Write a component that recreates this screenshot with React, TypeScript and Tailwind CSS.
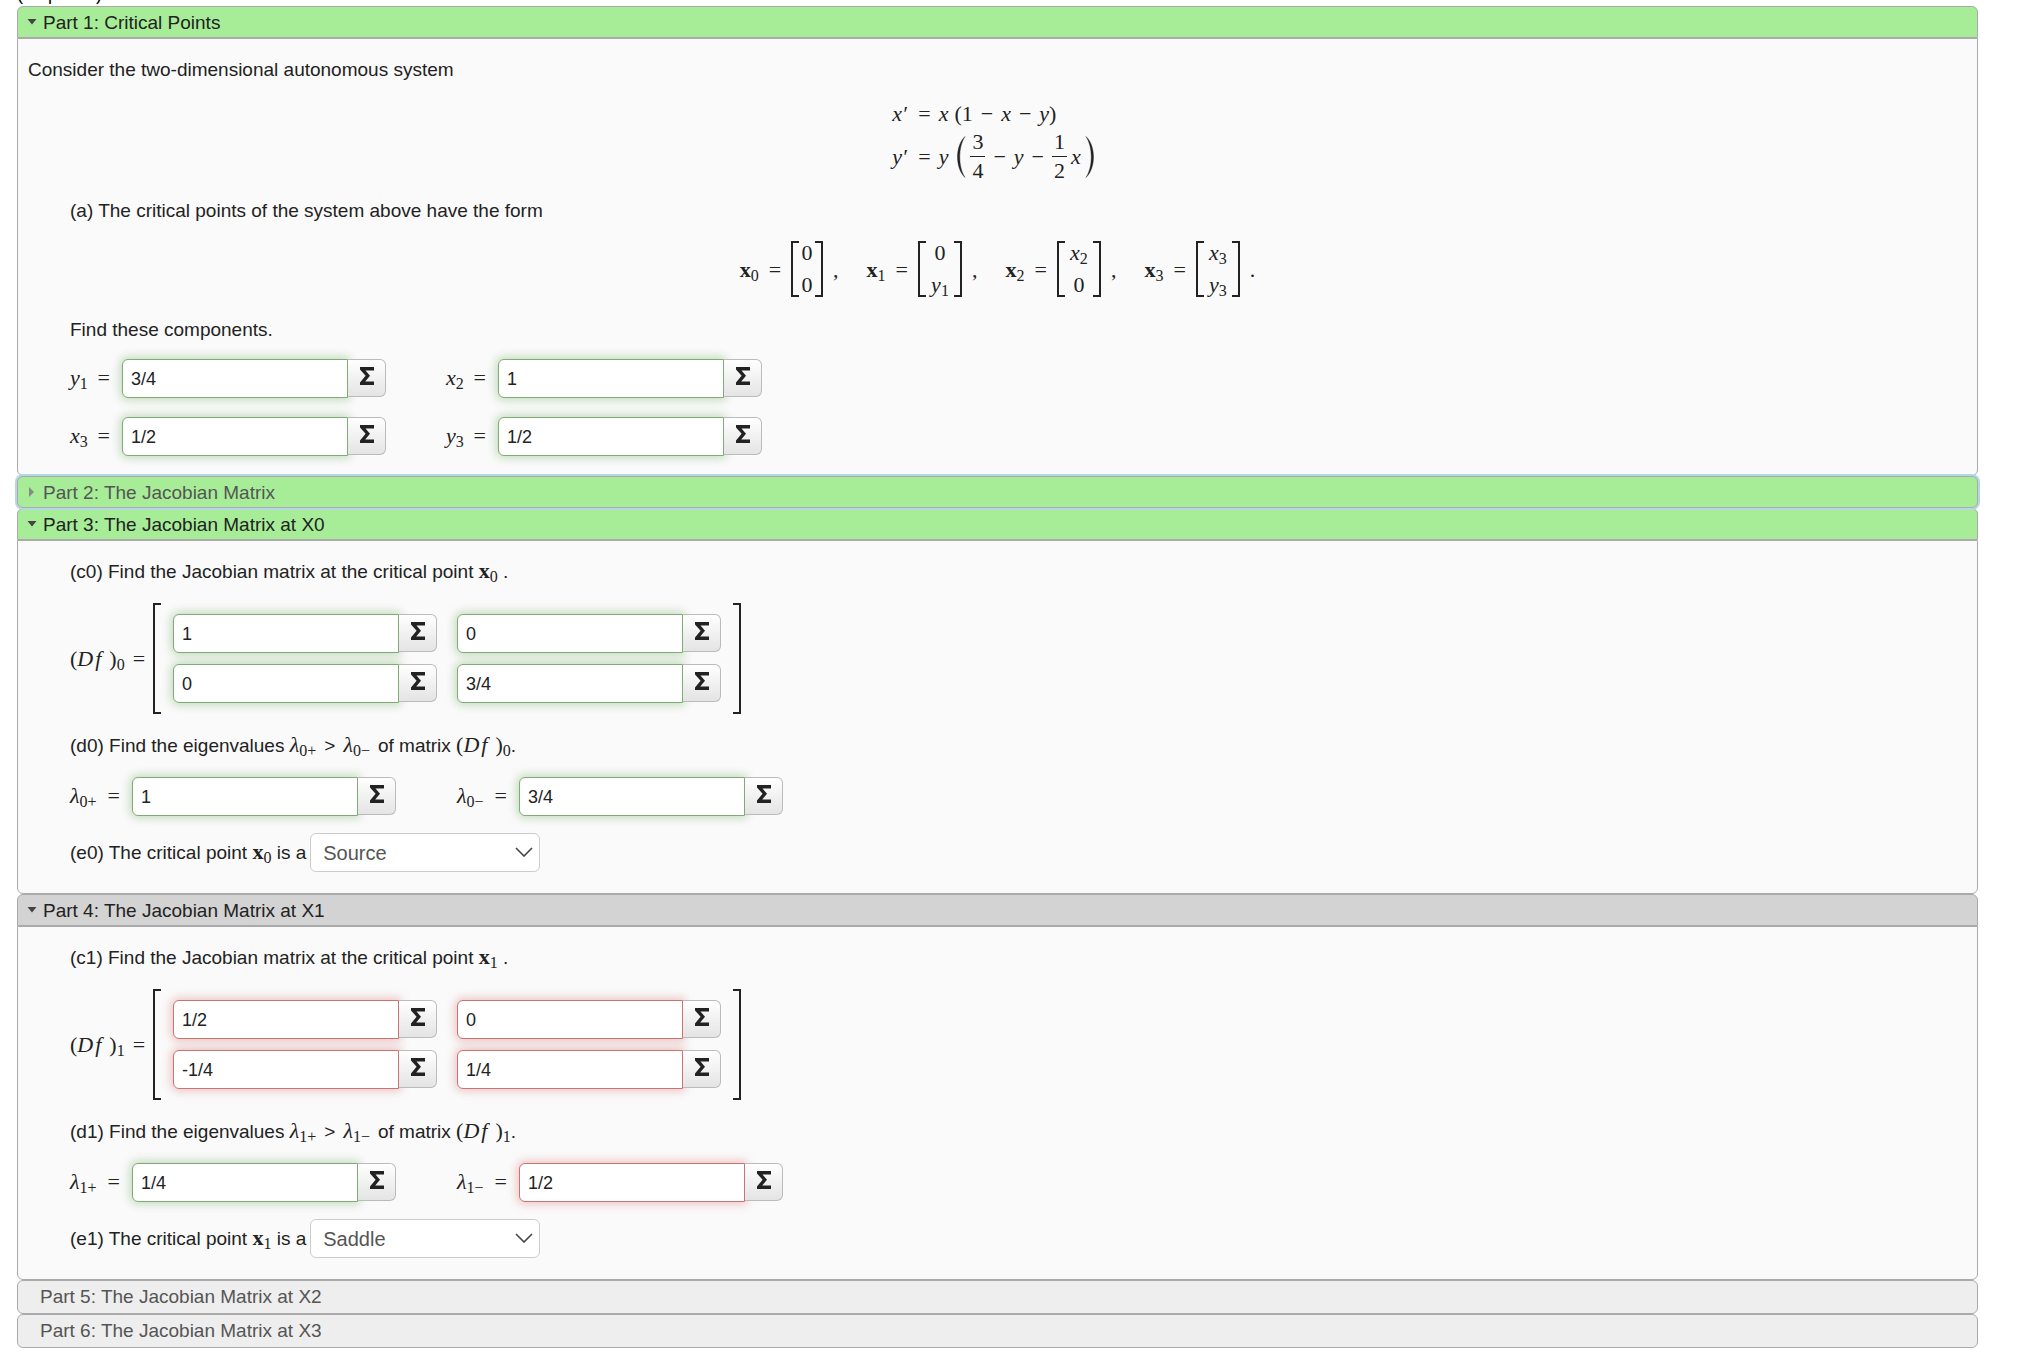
import { useState } from 'react';
import type { ReactNode } from 'react';

type Status = 'correct' | 'incorrect';

const statusStyles: Record<Status, string> = {
  correct: 'border-[#7fab74] shadow-[0_0_10px_2px_rgba(110,170,95,0.4)]',
  incorrect: 'border-[#c97472] shadow-[0_0_10px_2px_rgba(215,110,110,0.4)]',
};

function Sub({ children }: { children: ReactNode }) {
  return <sub className="text-[16px] not-italic font-normal">{children}</sub>;
}

function Vec({ n }: { n: number }) {
  return (
    <span className="font-['Liberation_Serif',serif] text-[22px]">
      <b>x</b>
      <Sub>{n}</Sub>
    </span>
  );
}

function Var({ name, n }: { name: string; n: string }) {
  return (
    <span className="font-['Liberation_Serif',serif] text-[22px]">
      <i>{name}</i>
      <Sub>{n}</Sub>
    </span>
  );
}

function Df({ n }: { n: number }) {
  return (
    <span className="font-['Liberation_Serif',serif] text-[22px]">
      (<i className="pr-0.5">D</i>
      <i className="pr-2">f</i>)<Sub>{n}</Sub>
    </span>
  );
}

function Eq() {
  return <span className="font-['Liberation_Serif',serif] text-[22px]">=</span>;
}

// Square bracket that stretches with whatever it wraps
function Bracket({ side }: { side: 'left' | 'right' }) {
  return (
    <span
      className={`w-2 self-stretch border-y-2 border-[#222] ${side === 'left' ? 'border-l-2' : 'border-r-2'}`}
    />
  );
}

function Paren({ flip }: { flip?: boolean }) {
  return (
    <svg width="10" height="42" viewBox="0 0 10 42" className={flip ? '-scale-x-100' : ''}>
      <path d="M9 0.5C-1 10 -1 32 9 41.5C2 31 2 11 9 0.5Z" fill="#222" stroke="#222" strokeWidth="0.4" />
    </svg>
  );
}

function Fraction({ top, bottom }: { top: string; bottom: string }) {
  return (
    <span className="flex flex-col items-center">
      <span className="border-b border-[#222] px-0.5 leading-7">{top}</span>
      <span className="leading-7">{bottom}</span>
    </span>
  );
}

function ColumnVector({ n, top, bottom, end }: { n: number; top: ReactNode; bottom: ReactNode; end: string }) {
  return (
    <div className="flex h-14 items-center">
      <Vec n={n} />
      <span className="mx-2.5">=</span>
      <Bracket side="left" />
      <span className={`flex flex-col items-center ${n === 0 ? 'w-4' : 'w-7'}`}>
        <span className="leading-8">{top}</span>
        <span className="leading-8">{bottom}</span>
      </span>
      <Bracket side="right" />
      <span className="ml-2.5">{end}</span>
    </div>
  );
}

function AnswerBox({ id, value, status, label }: { id: string; value: string; status: Status; label?: string }) {
  const [text, setText] = useState(value);

  return (
    <div className="flex">
      <input
        id={id}
        type="text"
        aria-label={label}
        value={text}
        onChange={(e) => setText(e.target.value)}
        className={`h-[39px] w-[226px] rounded-l-md border bg-white px-2 pt-0.5 text-lg text-[#222] outline-none ${statusStyles[status]}`}
      />
      <button
        type="button"
        aria-label="Open equation editor"
        className="flex h-[38px] w-[38px] justify-center rounded-r-md border border-l-0 border-[#bbb] bg-linear-to-b from-white to-[#e4e4e4] pt-[7px]"
      >
        <svg width="14" height="18" viewBox="0 0 14 18">
          <path d="M0 0H14V3.5H5.5L10 8.8L5.2 14.5H14V18H0V15.4L5.6 8.8L0 2.4Z" fill="#222" />
        </svg>
      </button>
    </div>
  );
}

interface LabeledAnswerProps {
  id: string;
  value: string;
  status: Status;
  wide?: boolean;
  children: ReactNode;
}

function LabeledAnswer({ id, value, status, wide, children }: LabeledAnswerProps) {
  return (
    <div className="flex items-center">
      <label htmlFor={id} className={`mr-3 flex justify-between pb-0.5 ${wide ? 'w-[50px]' : 'w-10'}`}>
        {children}
        <Eq />
      </label>
      <AnswerBox id={id} value={value} status={status} />
    </div>
  );
}

function TypeSelect({ id, initial }: { id: string; initial: string }) {
  const [type, setType] = useState(initial);

  return (
    <div className="relative">
      <select
        id={id}
        value={type}
        onChange={(e) => setType(e.target.value)}
        className="h-[39px] w-[230px] appearance-none rounded-md border border-[#ccc] bg-white px-3 text-xl text-[#555]"
      >
        <option>Source</option>
        <option>Sink</option>
        <option>Saddle</option>
        <option>Spiral</option>
        <option>Center</option>
      </select>
      <svg width="18" height="10" viewBox="0 0 18 10" className="pointer-events-none absolute right-[7px] top-[14px]">
        <path d="M1 1L9 9L17 1" fill="none" stroke="#444" strokeWidth="1.6" />
      </svg>
    </div>
  );
}

interface PartProps {
  title: string;
  color: string;
  open?: boolean;
  focused?: boolean;
  children?: ReactNode;
}

function Part({ title, color, open = false, focused, children }: PartProps) {
  const [isOpen, setIsOpen] = useState(open);

  return (
    <section>
      <h3>
        <button
          type="button"
          aria-expanded={isOpen}
          onClick={() => setIsOpen(!isOpen)}
          className={`flex h-8 w-full items-center gap-1.5 border border-[#aaa] pl-[9px] text-left ${color} ${
            isOpen ? 'rounded-t-md text-[#222]' : 'rounded-md text-[#555]'
          } ${focused ? 'relative z-10 ring-2 ring-[#b5d5e8]' : ''}`}
        >
          <svg width="10" height="12" viewBox="0 0 10 12">
            {isOpen ? <path d="M0.5 3H9.5L5 8.5Z" fill="#444" /> : <path d="M2 1V11L7 6Z" fill="#888" />}
          </svg>
          <span className="pt-[3px]">{title}</span>
        </button>
      </h3>
      {isOpen && <div className="rounded-b-md border border-[#aaa] bg-[#fafafa]">{children}</div>}
    </section>
  );
}

function LockedPart({ title }: { title: string }) {
  return (
    <section>
      <h3 className="rounded-md border border-[#aaa] bg-[#eee] pl-[22px] leading-8 text-[#555]">{title}</h3>
    </section>
  );
}

interface JacobianProps {
  n: number;
  matrix: { value: string; status: Status }[];
  plus: { value: string; status: Status };
  minus: { value: string; status: Status };
  type: string;
}

function JacobianQuestion({ n, matrix, plus, minus, type }: JacobianProps) {
  return (
    <div className="flex flex-col gap-[17px] pt-4 pb-[21px] pl-[52px]">
      <p className="leading-7">
        (c{n}) Find the Jacobian matrix at the critical point <Vec n={n} /> .
      </p>
      <div className="flex items-center">
        <div className="mr-2 flex gap-2">
          <Df n={n} />
          <Eq />
        </div>
        <Bracket side="left" />
        <div className="grid grid-cols-2 gap-x-5 gap-y-[11px] px-3 py-[11px]">
          {matrix.map((cell, i) => (
            <AnswerBox key={i} id={`m${n}-${i}`} label={`Matrix entry ${i + 1}`} {...cell} />
          ))}
        </div>
        <Bracket side="right" />
      </div>
      <p className="leading-7">
        (d{n}) Find the eigenvalues <Var name="λ" n={`${n}+`} />
        <span className="mx-2">&gt;</span>
        <Var name="λ" n={`${n}−`} />
        <span className="ml-2">of matrix</span> <Df n={n} />.
      </p>
      <div className="flex gap-[61px]">
        <LabeledAnswer id={`plus-${n}`} wide {...plus}>
          <Var name="λ" n={`${n}+`} />
        </LabeledAnswer>
        <LabeledAnswer id={`minus-${n}`} wide {...minus}>
          <Var name="λ" n={`${n}−`} />
        </LabeledAnswer>
      </div>
      <div className="flex items-center gap-1">
        <label htmlFor={`type-${n}`} className="leading-7">
          (e{n}) The critical point <Vec n={n} /> is a
        </label>
        <TypeSelect id={`type-${n}`} initial={type} />
      </div>
    </div>
  );
}

export default function App() {
  return (
    <main className="bg-white pl-[17px] pr-[54px] font-['Liberation_Sans',Arial,sans-serif] text-[19px] text-[#222]">
      <div className="flex h-1.5 items-end overflow-hidden text-lg leading-6 text-black">(10 points)</div>

      <Part title="Part 1: Critical Points" color="bg-[#a7ed98]" open>
        <div className="pt-[17px] pb-[19px]">
          <p className="pl-[10px] leading-7">Consider the two-dimensional autonomous system</p>
          <div className="mt-4 flex flex-col items-center pr-2 font-['Liberation_Serif',serif] text-[22px]">
            <div>
              <div className="flex gap-2 leading-7">
                <i className="w-[18px]">x′</i>
                <span>=</span>
                <span>
                  <i>x</i>
                  <span className="ml-1.5">(1</span>
                  <span className="mx-2">−</span>
                  <i>x</i>
                  <span className="mx-2">−</span>
                  <i>y</i>)
                </span>
              </div>
              <div className="flex items-center gap-2">
                <i className="w-[18px]">y′</i>
                <span>=</span>
                <i>y</i>
                <span className="flex items-center gap-1">
                  <Paren />
                  <Fraction top="3" bottom="4" />
                  <span className="mx-1">−</span>
                  <i>y</i>
                  <span className="mx-1">−</span>
                  <Fraction top="1" bottom="2" />
                  <i>x</i>
                  <Paren flip />
                </span>
              </div>
            </div>
          </div>
          <p className="mt-3 pl-[52px] leading-7">(a) The critical points of the system above have the form</p>
          <div className="mt-4 flex justify-center gap-7 font-['Liberation_Serif',serif] text-[22px]">
            <ColumnVector n={0} top="0" bottom="0" end="," />
            <ColumnVector n={1} top="0" bottom={<Var name="y" n="1" />} end="," />
            <ColumnVector n={2} top={<Var name="x" n="2" />} bottom="0" end="," />
            <ColumnVector n={3} top={<Var name="x" n="3" />} bottom={<Var name="y" n="3" />} end="." />
          </div>
          <p className="mt-[19px] pl-[52px] leading-7">Find these components.</p>
          <div className="mt-[15px] grid grid-cols-[max-content_max-content] gap-x-[60px] gap-y-[19px] pl-[52px]">
            <LabeledAnswer id="y1" value="3/4" status="correct">
              <Var name="y" n="1" />
            </LabeledAnswer>
            <LabeledAnswer id="x2" value="1" status="correct">
              <Var name="x" n="2" />
            </LabeledAnswer>
            <LabeledAnswer id="x3" value="1/2" status="correct">
              <Var name="x" n="3" />
            </LabeledAnswer>
            <LabeledAnswer id="y3" value="1/2" status="correct">
              <Var name="y" n="3" />
            </LabeledAnswer>
          </div>
        </div>
      </Part>

      <Part title="Part 2: The Jacobian Matrix" color="bg-[#a7ed98]" focused />

      <Part title="Part 3: The Jacobian Matrix at X0" color="bg-[#a7ed98]" open>
        <JacobianQuestion
          n={0}
          matrix={[
            { value: '1', status: 'correct' },
            { value: '0', status: 'correct' },
            { value: '0', status: 'correct' },
            { value: '3/4', status: 'correct' },
          ]}
          plus={{ value: '1', status: 'correct' }}
          minus={{ value: '3/4', status: 'correct' }}
          type="Source"
        />
      </Part>

      <Part title="Part 4: The Jacobian Matrix at X1" color="bg-[#d3d3d3]" open>
        <JacobianQuestion
          n={1}
          matrix={[
            { value: '1/2', status: 'incorrect' },
            { value: '0', status: 'incorrect' },
            { value: '-1/4', status: 'incorrect' },
            { value: '1/4', status: 'incorrect' },
          ]}
          plus={{ value: '1/4', status: 'correct' }}
          minus={{ value: '1/2', status: 'incorrect' }}
          type="Saddle"
        />
      </Part>

      <LockedPart title="Part 5: The Jacobian Matrix at X2" />
      <LockedPart title="Part 6: The Jacobian Matrix at X3" />
    </main>
  );
}
